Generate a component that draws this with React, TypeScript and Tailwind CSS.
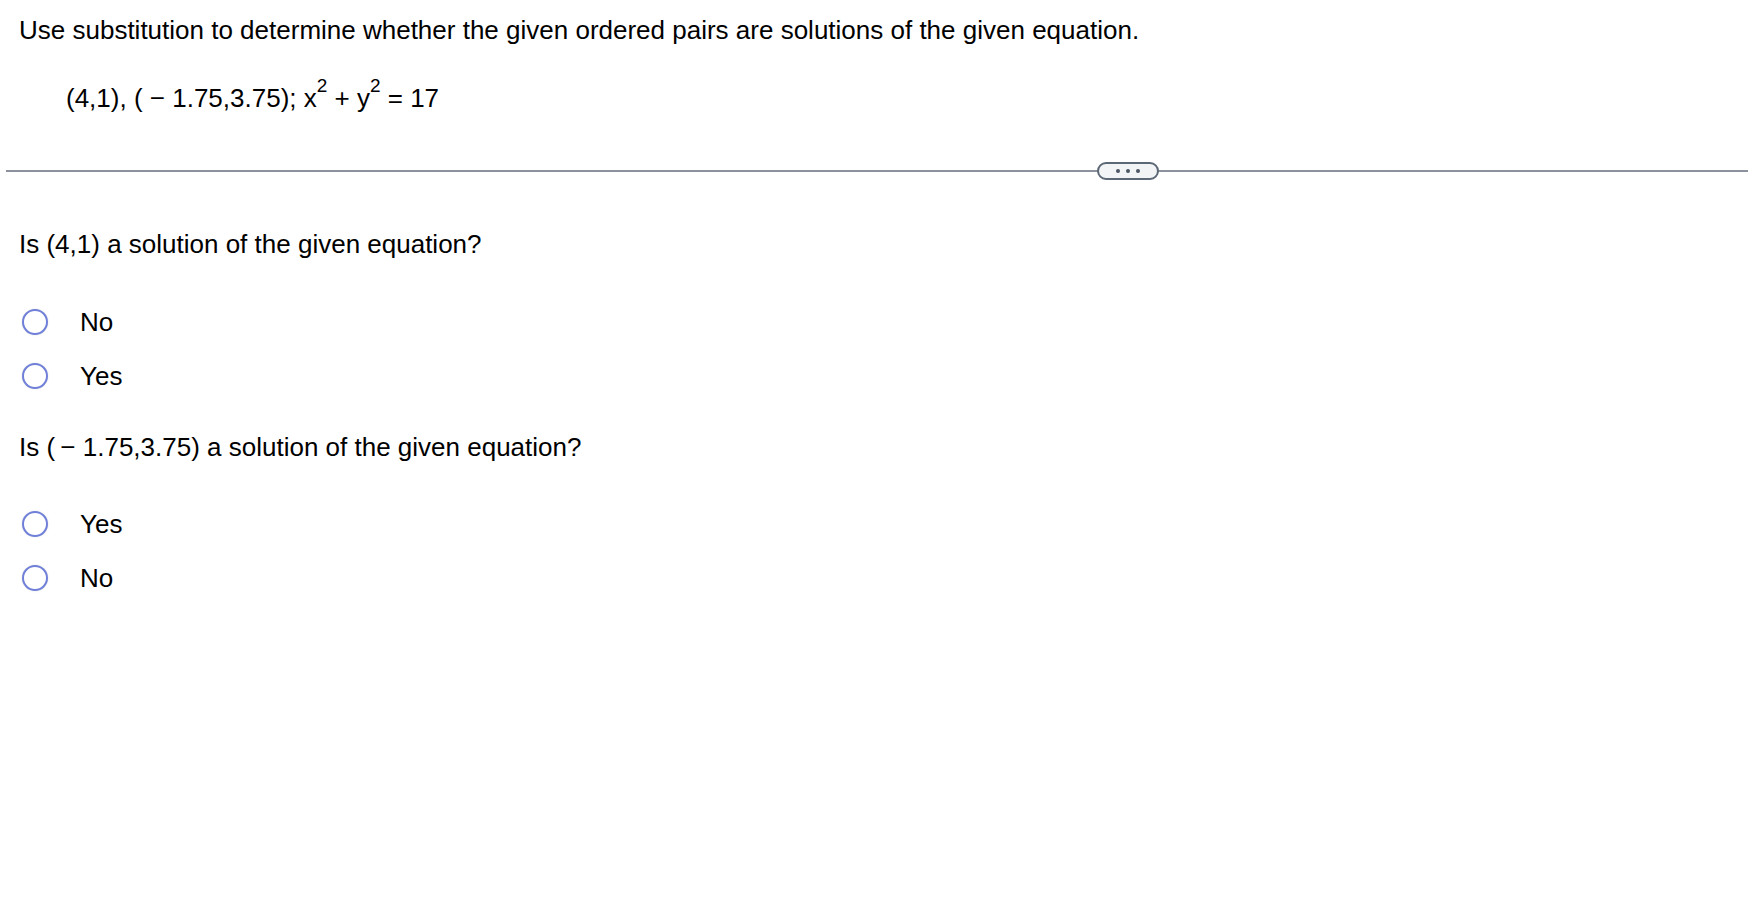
import React from "react";

const Radio = ({ label }: { label: string }) => (
  <label className="flex h-[54px] items-center pl-[22px]">
    <span className="h-[26px] w-[26px] rounded-full border-2 border-[#7080d8] bg-white shadow-[0_0_2px_rgba(0,0,0,0.12)]" />
    <span className="ml-[32px]">{label}</span>
  </label>
);

const Sq = () => <sup className="relative top-[-0.78em] text-[19px]">2</sup>;

export default function App() {
  return (
    <div
      className="min-h-screen w-full bg-white text-[26px] leading-[30px] text-black"
      style={{ fontFamily: '"Liberation Sans", Arial, sans-serif' }}
    >
      <p className="pl-[19px] pt-[15px]">
        Use substitution to determine whether the given ordered pairs are solutions of the given equation.
      </p>

      <p className="mt-[38px] pl-[66px]">
        (4,1), ( − 1.75,3.75); x<Sq /> + y<Sq /> = 17
      </p>

      {/* separator with collapse handle */}
      <div className="relative ml-[6px] mt-[57px] h-[2px] bg-[#8b929e]">
        <div className="absolute left-[1091px] top-[-8px] flex h-[18px] w-[62px] items-center justify-center gap-[6px] rounded-full border-2 border-[#5d6876] bg-[#f3f4f6]">
          <span className="h-[4px] w-[4px] rounded-full bg-[#4b5563]" />
          <span className="h-[4px] w-[4px] rounded-full bg-[#4b5563]" />
          <span className="h-[4px] w-[4px] rounded-full bg-[#4b5563]" />
        </div>
      </div>

      <p className="mt-[57px] pl-[19px]">Is (4,1) a solution of the given equation?</p>
      <div className="mt-[36px] flex flex-col">
        <Radio label="No" />
        <Radio label="Yes" />
      </div>

      <p className="mt-[29px] pl-[19px]">
        Is (<span className="tracking-[-2px]"> </span>− 1.75,3.75) a solution of the given equation?
      </p>
      <div className="mt-[35px] flex flex-col">
        <Radio label="Yes" />
        <Radio label="No" />
      </div>
    </div>
  );
}
